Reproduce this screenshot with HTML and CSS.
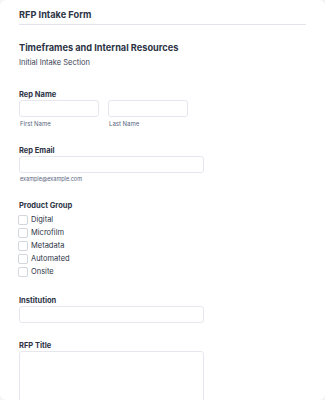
FILE: index.html
```html
<!DOCTYPE html>
<html>
<head>
<meta charset="utf-8">
<link rel="stylesheet" href="styles.css">
</head>
<body>
<div class="card">
  <div class="form-title">RFP Intake Form</div>
  <div class="section">
    <div class="section-title">Timeframes and Internal Resources</div>
    <div class="section-sub">Initial Intake Section</div>
  </div>

  <div class="field name-field">
    <div class="label">Rep Name</div>
    <div class="name-row">
      <div class="name-col">
        <div class="input short"></div>
        <div class="sublabel">First Name</div>
      </div>
      <div class="name-col">
        <div class="input short"></div>
        <div class="sublabel">Last Name</div>
      </div>
    </div>
  </div>

  <div class="field email-field">
    <div class="label">Rep Email</div>
    <div class="input wide"></div>
    <div class="sublabel small">example@example.com</div>
  </div>

  <div class="field group-field">
    <div class="label">Product Group</div>
    <div class="checks">
      <div class="check"><span class="box"></span><span>Digital</span></div>
      <div class="check"><span class="box"></span><span>Microfilm</span></div>
      <div class="check"><span class="box"></span><span>Metadata</span></div>
      <div class="check"><span class="box"></span><span>Automated</span></div>
      <div class="check"><span class="box"></span><span>Onsite</span></div>
    </div>
  </div>

  <div class="field inst-field">
    <div class="label">Institution</div>
    <div class="input wide"></div>
  </div>

  <div class="field title-field">
    <div class="label">RFP Title</div>
    <div class="input wide area"></div>
  </div>
</div>
</body>
</html>
```

FILE: styles.css
```css
html, body {
  margin: 0;
  padding: 0;
  background: #f3f3f8;
}
body {
  font-family: Inter, "Liberation Sans", sans-serif;
  color: #2c3345;
}
.card {
  background: #ffffff;
  border-radius: 6px;
  height: 400px;
  padding: 9px 19px 0 19px;
  box-sizing: border-box;
  overflow: hidden;
}
.form-title {
  font-size: 9.2px;
  font-weight: 700;
  line-height: 12px;
  padding-bottom: 3px;
  border-bottom: 1px solid #e4e4f0;
  width: 287px;
}
.section {
  padding-top: 16px;
}
.section-title {
  font-size: 9.2px;
  font-weight: 700;
  line-height: 13px;
}
.section-sub {
  font-size: 7.5px;
  line-height: 10px;
  margin-top: 4px;
  color: #3a4256;
}
.field {
  display: flex;
  flex-direction: column;
}
.name-field { margin-top: 22px; }
.email-field { margin-top: 19px; }
.group-field { margin-top: 18px; }
.inst-field { margin-top: 19px; }
.title-field { margin-top: 18px; }
.label {
  font-size: 7.5px;
  font-weight: 700;
  line-height: 9px;
  margin-bottom: 1px;
}
.name-row {
  display: flex;
  gap: 9px;
}
.name-col {
  display: flex;
  flex-direction: column;
}
.input {
  border: 1px solid #e6e6ee;
  border-radius: 3px;
  box-sizing: border-box;
  height: 17px;
  background: #fff;
}
.input.short { width: 80px; }
.input.wide { width: 185px; }
.input.area { height: 70px; }
.sublabel {
  font-size: 6px;
  line-height: 7px;
  margin-top: 3px;
  margin-left: 1px;
  color: #57647e;
}
.sublabel.small {
  font-size: 5.5px;
}
.checks {
  display: flex;
  flex-direction: column;
  gap: 3px;
  margin-top: 4px;
}
.check {
  display: flex;
  align-items: center;
  gap: 3px;
  font-size: 7.5px;
  line-height: 10px;
}
.box {
  width: 10px;
  height: 10px;
  margin-left: -1px;
  box-sizing: border-box;
  border: 1px solid #d4d6de;
  border-radius: 2px;
}
```
